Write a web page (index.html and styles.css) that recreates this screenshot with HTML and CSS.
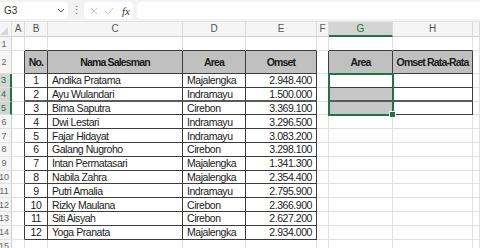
FILE: index.html
```html
<!DOCTYPE html>
<html lang="id">
<head>
    <meta charset="UTF-8">
    <title>Omset Salesman</title>
    <link rel="stylesheet" href="styles.css">
</head>
<body>

    <div class="bar">
        <div class="namebox">
            <span>G3</span>
            <svg width="8" height="5" viewBox="0 0 8 5"><path d="M1 1 L4 4 L7 1" fill="none" stroke="#555" stroke-width="1"/></svg>
        </div>
        <div class="dots">&#8942;</div>
        <div class="fxbox">
            <svg width="8" height="8" viewBox="0 0 8 8"><path d="M1 1 L7 7 M7 1 L1 7" stroke="#c4c4c4" stroke-width="1"/></svg>
            <svg width="10" height="8" viewBox="0 0 10 8"><path d="M1 4 L4 7 L9 1" fill="none" stroke="#c4c4c4" stroke-width="1"/></svg>
            <span class="fx">fx</span>
        </div>
        <div class="formula"></div>
    </div>

    <div class="sheet">
        <div class="row colhead">
            <div class="cell rh corner"><svg width="8" height="8" viewBox="0 0 8 8"><path d="M8 0 L8 8 L0 8 Z" fill="#d6d6d6"/></svg></div>
            <div class="cell a">A</div><div class="cell b">B</div><div class="cell c">C</div><div class="cell d">D</div>
            <div class="cell e">E</div><div class="cell f">F</div><div class="cell g active">G</div><div class="cell h">H</div><div class="cell i"></div>
        </div>

        <div class="row r1">
            <div class="cell rh">1</div>
            <div class="cell a"></div><div class="cell b top"></div><div class="cell c top"></div><div class="cell d top"></div>
            <div class="cell e top"></div><div class="cell f"></div><div class="cell g top"></div><div class="cell h top"></div><div class="cell i"></div>
        </div>

        <div class="row r2">
            <div class="cell rh">2</div>
            <div class="cell a edge"></div>
            <div class="cell b th">No.</div><div class="cell c th">Nama Salesman</div><div class="cell d th">Area</div><div class="cell e th">Omset</div>
            <div class="cell f edge"></div>
            <div class="cell g th">Area</div><div class="cell h th">Omset Rata-Rata</div>
            <div class="cell i"></div>
        </div>

        <div class="row">
            <div class="cell rh picked">3</div>
            <div class="cell a edge"></div>
            <div class="cell b td ctr">1</div><div class="cell c td">Andika Pratama</div><div class="cell d td">Majalengka</div><div class="cell e td num">2.948.400</div>
            <div class="cell f edge"></div>
            <div class="cell g td"></div><div class="cell h td"></div>
            <div class="cell i"></div>
        </div>

        <div class="row thick">
            <div class="cell rh picked">4</div>
            <div class="cell a edge"></div>
            <div class="cell b td ctr">2</div><div class="cell c td">Ayu Wulandari</div><div class="cell d td">Indramayu</div><div class="cell e td num">1.500.000</div>
            <div class="cell f edge"></div>
            <div class="cell g td shade"></div><div class="cell h td"></div>
            <div class="cell i"></div>
        </div>

        <div class="row">
            <div class="cell rh picked">5</div>
            <div class="cell a edge"></div>
            <div class="cell b td ctr">3</div><div class="cell c td">Bima Saputra</div><div class="cell d td">Cirebon</div><div class="cell e td num">3.369.100</div>
            <div class="cell f edge"></div>
            <div class="cell g td shade"></div><div class="cell h td"></div>
            <div class="cell i"></div>
        </div>

        <div class="row">
            <div class="cell rh">6</div>
            <div class="cell a edge"></div>
            <div class="cell b td ctr">4</div><div class="cell c td">Dwi Lestari</div><div class="cell d td">Indramayu</div><div class="cell e td num">3.296.500</div>
            <div class="cell f"></div><div class="cell g"></div><div class="cell h"></div><div class="cell i"></div>
        </div>

        <div class="row">
            <div class="cell rh">7</div>
            <div class="cell a edge"></div>
            <div class="cell b td ctr">5</div><div class="cell c td">Fajar Hidayat</div><div class="cell d td">Indramayu</div><div class="cell e td num">3.083.200</div>
            <div class="cell f"></div><div class="cell g"></div><div class="cell h"></div><div class="cell i"></div>
        </div>

        <div class="row">
            <div class="cell rh">8</div>
            <div class="cell a edge"></div>
            <div class="cell b td ctr">6</div><div class="cell c td">Galang Nugroho</div><div class="cell d td">Cirebon</div><div class="cell e td num">3.298.100</div>
            <div class="cell f"></div><div class="cell g"></div><div class="cell h"></div><div class="cell i"></div>
        </div>

        <div class="row">
            <div class="cell rh">9</div>
            <div class="cell a edge"></div>
            <div class="cell b td ctr">7</div><div class="cell c td">Intan Permatasari</div><div class="cell d td">Majalengka</div><div class="cell e td num">1.341.300</div>
            <div class="cell f"></div><div class="cell g"></div><div class="cell h"></div><div class="cell i"></div>
        </div>

        <div class="row">
            <div class="cell rh">10</div>
            <div class="cell a edge"></div>
            <div class="cell b td ctr">8</div><div class="cell c td">Nabila Zahra</div><div class="cell d td">Majalengka</div><div class="cell e td num">2.354.400</div>
            <div class="cell f"></div><div class="cell g"></div><div class="cell h"></div><div class="cell i"></div>
        </div>

        <div class="row">
            <div class="cell rh">11</div>
            <div class="cell a edge"></div>
            <div class="cell b td ctr">9</div><div class="cell c td">Putri Amalia</div><div class="cell d td">Indramayu</div><div class="cell e td num">2.795.900</div>
            <div class="cell f"></div><div class="cell g"></div><div class="cell h"></div><div class="cell i"></div>
        </div>

        <div class="row">
            <div class="cell rh">12</div>
            <div class="cell a edge"></div>
            <div class="cell b td ctr">10</div><div class="cell c td">Rizky Maulana</div><div class="cell d td">Cirebon</div><div class="cell e td num">2.366.900</div>
            <div class="cell f"></div><div class="cell g"></div><div class="cell h"></div><div class="cell i"></div>
        </div>

        <div class="row">
            <div class="cell rh">13</div>
            <div class="cell a edge"></div>
            <div class="cell b td ctr">11</div><div class="cell c td">Siti Aisyah</div><div class="cell d td">Cirebon</div><div class="cell e td num">2.627.200</div>
            <div class="cell f"></div><div class="cell g"></div><div class="cell h"></div><div class="cell i"></div>
        </div>

        <div class="row">
            <div class="cell rh">14</div>
            <div class="cell a edge"></div>
            <div class="cell b td ctr">12</div><div class="cell c td">Yoga Pranata</div><div class="cell d td">Majalengka</div><div class="cell e td num">2.934.000</div>
            <div class="cell f"></div><div class="cell g"></div><div class="cell h"></div><div class="cell i"></div>
        </div>

        <div class="row">
            <div class="cell rh">15</div>
            <div class="cell a"></div><div class="cell b"></div><div class="cell c"></div><div class="cell d"></div>
            <div class="cell e"></div><div class="cell f"></div><div class="cell g"></div><div class="cell h"></div><div class="cell i"></div>
        </div>

        <!-- selection G3:G5 -->
        <div class="selection"><span class="handle"></span></div>
    </div>

</body>
</html>
```

FILE: styles.css
```css
body {
    margin: 0;
    width: 480px;
    height: 248px;
    overflow: hidden;
    background: #ffffff;
    font-family: "Liberation Sans", Arial, sans-serif;
    color: #222;
}

/* formula bar */
.bar {
    height: 22px;
    background: #f3f3f3;
    display: flex;
    align-items: center;
    border-bottom: 1px solid #e3e3e3;
    box-sizing: border-box;
}
.namebox {
    width: 68px;
    height: 17px;
    background: #fff;
    border-radius: 0 4px 4px 0;
    display: flex;
    align-items: center;
    justify-content: space-between;
    padding: 0 3px 0 4px;
    box-sizing: border-box;
    font-size: 10px;
    color: #333;
}
.dots {
    width: 16px;
    text-align: center;
    font-size: 11px;
    color: #666;
}
.fxbox {
    width: 49px;
    height: 17px;
    background: #fff;
    border-radius: 4px;
    display: flex;
    align-items: center;
    gap: 6px;
    padding-left: 6px;
    box-sizing: border-box;
}
.fx {
    font: italic 11px "Liberation Serif", serif;
    color: #333;
    margin-left: 2px;
}
.formula {
    flex: 1;
    height: 17px;
    margin-left: 4px;
    background: #fff;
    border-radius: 4px 0 0 4px;
}

/* grid */
.sheet {
    position: relative;
}
.row {
    display: flex;
    height: 13.8px;
}
.row.colhead {
    height: 15px;
    background: #f5f5f5;
}
.row.r1 {
    height: 14px;
}
.row.r2 {
    height: 23px;
}
.row:last-of-type {
    height: 20px;
}
.cell {
    box-sizing: border-box;
    flex: none;
    border-right: 1px solid #e1e1e1;
    border-bottom: 1px solid #e1e1e1;
    font-size: 10.5px;
    letter-spacing: -0.45px;
    line-height: 12px;
    display: flex;
    align-items: center;
    white-space: nowrap;
    overflow: hidden;
}
.rh { width: 12px; }
.a { width: 13px; }
.b { width: 23px; }
.c { width: 135px; }
.d { width: 63px; }
.e { width: 71px; }
.f { width: 12px; }
.g { width: 64px; }
.h { width: 80px; }
.i { flex: 1; }

.colhead .cell {
    justify-content: center;
    font-size: 10px;
    letter-spacing: 0;
    color: #555;
    border-right-color: #dadada;
    border-bottom-color: #d0d0d0;
}
.colhead .active {
    background: #d4d4d4;
    color: #217346;
    border-bottom: 2px solid #217346;
}
.corner {
    align-items: flex-end;
    padding-bottom: 1px;
}

.rh {
    background: #f5f5f5;
    justify-content: center;
    padding-right: 3px;
    font-size: 9px;
    letter-spacing: 0;
    color: #666;
    border-right-color: #d0d0d0;
}
.rh.picked {
    background: #d4d4d4;
    color: #217346;
    border-right: 2px solid #217346;
}

/* table borders */
.top { border-bottom-color: #3c3c3c; }
.edge { border-right-color: #3c3c3c; }
.th, .td {
    border-right-color: #3c3c3c;
    border-bottom-color: #3c3c3c;
}
.th {
    background: #c0c0c0;
    font-weight: bold;
    letter-spacing: -0.85px;
    justify-content: center;
    color: #1a1a1a;
}
.td {
    padding: 0 4px;
    color: #1a1a1a;
}
.ctr { justify-content: center; }
.num { justify-content: flex-end; }
.shade { background: #c6c6c6; }
.thick .cell.td {
    border-bottom: 2px solid #5a5a5a;
}

.selection {
    position: absolute;
    left: 328px;
    top: 51px;
    width: 66px;
    height: 43px;
    border: 2px solid #217346;
    box-sizing: border-box;
}
.handle {
    position: absolute;
    right: -4px;
    bottom: -4px;
    width: 5px;
    height: 5px;
    background: #217346;
    border: 1px solid #fff;
}
```
